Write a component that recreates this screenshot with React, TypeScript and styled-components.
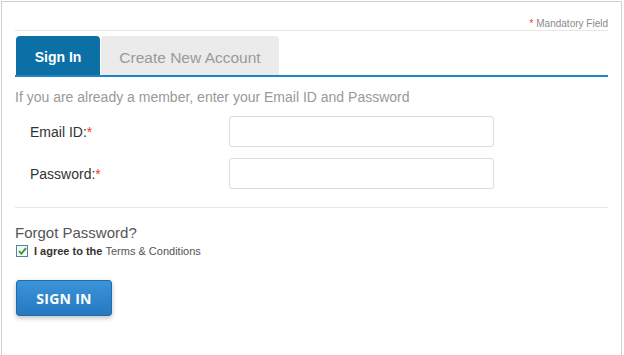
import React from "react";
import styled, { createGlobalStyle } from "styled-components";

const Global = createGlobalStyle`
  html, body { margin: 0; padding: 0; background: #fff; }
  body { font-family: Arial, "Liberation Sans", sans-serif; overflow: hidden; }
`;

const Frame = styled.div`
  box-sizing: border-box;
  margin: 1px 0 0 1px;
  width: 621px;
  height: 360px;
  border: 1px solid #cfcfcf;
  border-bottom: none;
  padding: 0 13px 0 13px;
`;

const Mandatory = styled.div`
  text-align: right;
  font-size: 10px;
  color: #8a8a8a;
  padding-top: 16px;
  padding-bottom: 0;
  line-height: 12px;
  border-bottom: 1px solid #e6e6e6;
`;

const Star = styled.span`
  color: #e8401c;
`;

const TabRow = styled.div`
  display: flex;
  margin-top: 5px;
  padding-left: 1px;
  border-bottom: 2px solid #1d84c9;
`;

const Tab = styled.div<{ $active?: boolean }>`
  height: 39px;
  display: flex;
  align-items: center;
  justify-content: center;
  border-radius: 4px 4px 0 0;
  margin-right: 1px;
  box-sizing: border-box;
  width: ${(p) => (p.$active ? "84px" : "178px")};
  background: ${(p) => (p.$active ? "#0c6fa6" : "#ebebeb")};
  color: ${(p) => (p.$active ? "#fff" : "#9a9a9a")};
  font-size: ${(p) => (p.$active ? "14px" : "15.5px")};
  font-weight: ${(p) => (p.$active ? "bold" : "normal")};
  padding-top: ${(p) => (p.$active ? "2px" : "4px")};
`;

const Intro = styled.div`
  font-size: 14px;
  color: #999;
  margin-top: 12px;
  line-height: 16px;
`;

const Fields = styled.div`
  display: flex;
  flex-direction: column;
  gap: 11px;
  margin-top: 11px;
  padding-bottom: 18px;
  border-bottom: 1px solid #e6e6e6;
`;

const FieldRow = styled.div`
  display: flex;
  align-items: center;
`;

const Label = styled.label`
  width: 199px;
  padding-left: 15px;
  font-size: 14px;
  color: #333;
`;

const Input = styled.input`
  box-sizing: border-box;
  width: 265px;
  height: 31px;
  border: 1px solid #dcdcdc;
  border-radius: 3px;
  outline: none;
  background: #fff;
`;

const Forgot = styled.div`
  font-size: 15px;
  color: #555;
  margin-top: 16px;
  line-height: 17px;
`;

const AgreeRow = styled.div`
  display: flex;
  align-items: center;
  margin-top: 4px;
  padding-left: 1px;
  font-size: 11px;
  color: #333;
`;

const Box = styled.span`
  box-sizing: border-box;
  width: 12px;
  height: 12px;
  border: 1px solid #5a7fa0;
  background: #f4f6f8;
  display: inline-flex;
  align-items: center;
  justify-content: center;
  margin-right: 6px;
`;

const Bold = styled.span`
  font-weight: bold;
  margin-right: 3px;
`;

const Terms = styled.span`
  color: #555;
`;

const Button = styled.button`
  margin-top: 23px;
  margin-left: 1px;
  width: 96px;
  height: 36px;
  border: 1px solid #1f6ca8;
  border-radius: 3px;
  background: linear-gradient(#3d93d8, #2479c0);
  color: #fff;
  font-family: "Open Sans", Arial, sans-serif;
  font-weight: bold;
  font-size: 14px;
  letter-spacing: 0.3px;
  box-shadow: 0 2px 5px rgba(0, 0, 0, 0.25);
  cursor: pointer;
`;

export default function App() {
  return (
    <>
      <Global />
      <Frame>
        <Mandatory>
          <Star>*</Star> Mandatory Field
        </Mandatory>
        <TabRow>
          <Tab $active>Sign In</Tab>
          <Tab>Create New Account</Tab>
        </TabRow>
        <Intro>If you are already a member, enter your Email ID and Password</Intro>
        <Fields>
          <FieldRow>
            <Label>
              Email ID:<Star>*</Star>
            </Label>
            <Input type="text" />
          </FieldRow>
          <FieldRow>
            <Label>
              Password:<Star>*</Star>
            </Label>
            <Input type="password" />
          </FieldRow>
        </Fields>
        <Forgot>Forgot Password?</Forgot>
        <AgreeRow>
          <Box>
            <svg width="9" height="8" viewBox="0 0 9 8">
              <path d="M1 4.2 L3.4 6.6 L8 1.2" stroke="#2aa02a" strokeWidth="1.8" fill="none" />
            </svg>
          </Box>
          <Bold>I agree to the</Bold>
          <Terms>Terms &amp; Conditions</Terms>
        </AgreeRow>
        <Button>SIGN IN</Button>
      </Frame>
    </>
  );
}
